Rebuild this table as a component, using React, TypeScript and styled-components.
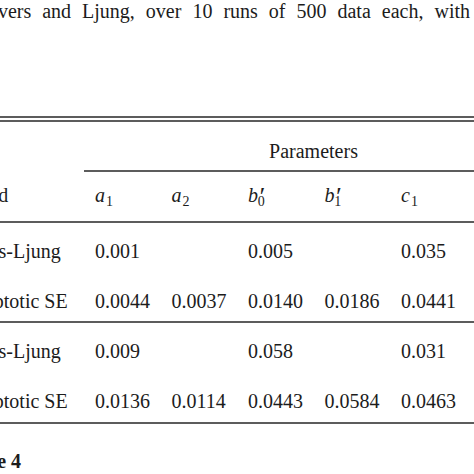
import styled, { createGlobalStyle } from 'styled-components';

const ink = '#1c1c1c';
const ruleColor = '#5c5c5c';

const GlobalStyle = createGlobalStyle`
  html, body {
    margin: 0;
    padding: 0;
    background: #fff;
    overflow: hidden;
  }
  body {
    font-family: 'Liberation Serif', 'Times New Roman', serif;
    font-size: 20px;
    color: ${ink};
  }
`;

const Page = styled.div`
  width: 474px;
  height: 474px;
  overflow: hidden;
`;

// justify-content: flex-end lets the start of the sentence run off the left edge
const TextLine = styled.div`
  display: flex;
  justify-content: flex-end;
  height: 22px;
  line-height: 22px;
  padding-right: 4px;
  white-space: nowrap;
  word-spacing: 6px;
`;

const Table = styled.div`
  margin-top: 94px;
  margin-left: -51px;
  width: 594px;
`;

const DoubleRule = styled.div`
  height: 2px;
  border-top: 2px solid ${ruleColor};
  border-bottom: 2px solid ${ruleColor};
`;

const Rule = styled.div<{ $indent?: number }>`
  height: 0;
  margin-left: ${(p) => p.$indent ?? 0}px;
  border-top: 2px solid ${ruleColor};
`;

const Section = styled.div<{ $top: number; $bottom: number; $gap?: number }>`
  display: grid;
  grid-template-columns: 135px repeat(6, 76.5px);
  grid-auto-rows: 22px;
  row-gap: ${(p) => p.$gap ?? 0}px;
  padding-top: ${(p) => p.$top}px;
  padding-bottom: ${(p) => p.$bottom}px;
  line-height: 22px;
  white-space: nowrap;
`;

const Spanner = styled.div`
  grid-column: 2 / -1;
  text-align: center;
`;

const Method = styled.div`
  margin-left: -3px;
`;

const Cell = styled.div`
  height: 22px;
  padding-left: 11px;
`;

const Var = styled.i`
  font-style: italic;
`;

const Sub = styled.span<{ $pull?: number }>`
  font-size: 14px;
  position: relative;
  top: 4px;
  margin-left: ${(p) => (p.$pull ? -p.$pull : 1)}px;
`;

const Prime = styled.span`
  font-style: italic;
  font-size: 26px;
  line-height: 0;
  position: relative;
  top: 3px;
`;

const TableLabel = styled.div`
  margin-top: 26px;
  margin-left: -41px;
  line-height: 22px;
  font-weight: bold;
`;

type Row = { method: string; values: string[] };

const groups: Row[][] = [
  [
    { method: 'Travers-Ljung', values: ['0.001', '', '0.005', '', '0.035', '0.012'] },
    { method: 'Asymptotic SE', values: ['0.0044', '0.0037', '0.0140', '0.0186', '0.0441', '0.0273'] },
  ],
  [
    { method: 'Travers-Ljung', values: ['0.009', '', '0.058', '', '0.031', '0.027'] },
    { method: 'Asymptotic SE', values: ['0.0136', '0.0114', '0.0443', '0.0584', '0.0463', '0.0512'] },
  ],
];

function Primed({ sub }: { sub: string }) {
  return (
    <>
      <Var>b</Var>
      <Prime>′</Prime>
      <Sub $pull={6}>{sub}</Sub>
    </>
  );
}

export default function App() {
  return (
    <Page>
      <GlobalStyle />
      <TextLine>
        <span>Travers and Ljung, over 10 runs of 500 data each, with</span>
      </TextLine>

      <Table>
        <DoubleRule />
        <Section $top={18} $bottom={8}>
          <div />
          <Spanner>Parameters</Spanner>
        </Section>
        <Rule $indent={135} />
        <Section $top={12} $bottom={15}>
          <Method>Method</Method>
          <Cell>
            <Var>a</Var>
            <Sub>1</Sub>
          </Cell>
          <Cell>
            <Var>a</Var>
            <Sub>2</Sub>
          </Cell>
          <Cell>
            <Primed sub="0" />
          </Cell>
          <Cell>
            <Primed sub="1" />
          </Cell>
          <Cell>
            <Var>c</Var>
            <Sub>1</Sub>
          </Cell>
          <Cell>
            <Var>c</Var>
            <Sub>2</Sub>
          </Cell>
        </Section>
        {groups.map((rows, g) => (
          <div key={g}>
            <Rule />
            <Section $top={17} $bottom={g === 0 ? 9 : 10} $gap={28}>
              {rows.flatMap((row, r) => [
                <Method key={`m${r}`}>{row.method}</Method>,
                ...row.values.map((v, i) => <Cell key={`${r}-${i}`}>{v}</Cell>),
              ])}
            </Section>
          </div>
        ))}
        <Rule />
      </Table>

      <TableLabel>Table 4</TableLabel>
    </Page>
  );
}
